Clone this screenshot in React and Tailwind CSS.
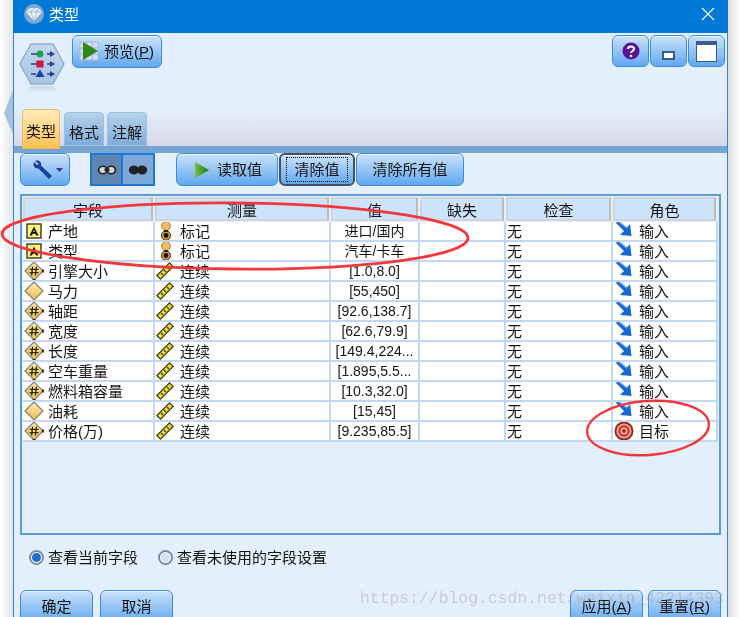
import React from "react";

const rows = [
  ["产地", "A", "flag", "标记", "进口/国内", "in"],
  ["类型", "A", "flag", "标记", "汽车/卡车", "in"],
  ["引擎大小", "#", "ruler", "连续", "[1.0,8.0]", "in"],
  ["马力", "d", "ruler", "连续", "[55,450]", "in"],
  ["轴距", "#", "ruler", "连续", "[92.6,138.7]", "in"],
  ["宽度", "#", "ruler", "连续", "[62.6,79.9]", "in"],
  ["长度", "#", "ruler", "连续", "[149.4,224...", "in"],
  ["空车重量", "#", "ruler", "连续", "[1.895,5.5...", "in"],
  ["燃料箱容量", "#", "ruler", "连续", "[10.3,32.0]", "in"],
  ["油耗", "d", "ruler", "连续", "[15,45]", "in"],
  ["价格(万)", "#", "ruler", "连续", "[9.235,85.5]", "target"],
];

const cols = "grid-cols-[132px_176px_89px_86px_107px_105px]";
const btn =
  "flex items-center justify-center rounded-[6px] border border-[#3a8de0] bg-linear-to-b from-[#cce2fa] to-[#5fa8ee] shadow-[inset_0_1px_0_#eaf4ff] text-[15px] leading-none text-[#141414]";

function FieldIcon({ kind }) {
  if (kind === "A")
    return (
      <svg width="16" height="16" viewBox="0 0 16 16" className="ml-[3px] mr-[6px] shrink-0">
        <rect x="1" y="1" width="14" height="14" fill="#fff27a" stroke="#3a3a1e" strokeWidth="1.4" />
        <path d="M3.5 12.5 L8 3.5 L12.5 12.5 H10 L9.4 10.8 H6.6 L6 12.5 Z M7.2 9 H8.8 L8 6.8 Z" fill="#111" fillRule="evenodd" />
      </svg>
    );
  return (
    <svg width="20" height="20" viewBox="0 0 20 20" className="ml-[1px] mr-[4px] shrink-0">
      <defs>
        <linearGradient id="dia" x1="0" y1="0" x2="0" y2="1">
          <stop offset="0" stopColor="#fff0b8" />
          <stop offset="1" stopColor="#e9b94e" />
        </linearGradient>
      </defs>
      <polygon points="10,1 19,10 10,19 1,10" fill="url(#dia)" stroke="#8b8368" strokeWidth="1.3" />
      {kind === "#" && (
        <>
          <path d="M8.6 5.5 L7.6 14.5 M12.4 5.5 L11.4 14.5 M5.5 8.4 H14.5 M5.5 11.6 H14.5" stroke="#2e2408" strokeWidth="1.3" fill="none" />
          <path d="M19 8.5 V11.5 M8.5 19 H11.5" stroke="#111" strokeWidth="1.6" />
        </>
      )}
    </svg>
  );
}

function MeasureIcon({ kind }) {
  if (kind === "flag")
    return (
      <svg width="12" height="20" viewBox="0 0 12 20" className="ml-[5px] mr-[8px] shrink-0">
        <circle cx="6" cy="5" r="4.4" fill="#f5bd62" stroke="#a9802f" />
        <circle cx="6" cy="14.5" r="4.6" fill="#e09a30" stroke="#333" />
        <circle cx="6" cy="14.5" r="2.4" fill="#0c0c0c" />
        <rect x="4" y="9" width="4" height="2" fill="#222" />
      </svg>
    );
  return (
    <svg width="20" height="20" viewBox="0 0 20 20" className="mr-[5px] shrink-0">
      <polygon points="1,14.5 14.5,1 19,5.5 5.5,19" fill="#3b3b2c" />
      <polygon points="2.8,14.5 14.5,2.8 17.2,5.5 5.5,17.2" fill="#f0e020" />
      <path d="M6 12 L8 14 M9 9 L11 11 M12 6 L14 8" stroke="#333" strokeWidth="1.1" />
    </svg>
  );
}

function RoleIcon({ kind }) {
  if (kind === "target")
    return (
      <svg width="20" height="20" viewBox="0 0 20 20" className="mr-[5px] shrink-0">
        <circle cx="10" cy="10" r="9.5" fill="#8f2a20" />
        <circle cx="10" cy="10" r="7.6" fill="#efa796" />
        <circle cx="10" cy="10" r="5.8" fill="#c93526" />
        <circle cx="10" cy="10" r="3.6" fill="#f2b5a4" />
        <circle cx="10" cy="10" r="2" fill="#bc2c1c" />
      </svg>
    );
  return (
    <svg width="18" height="18" viewBox="0 0 18 18" className="ml-[1px] mr-[6px] -mt-[4px] shrink-0">
      <path d="M1 3 L3 0.5 L12 7.5 L15 4 L16.5 16 L5 15 L9 11 Z" fill="#1667d6" />
      <path d="M3 1.5 L12 8.5" stroke="#6fb0f5" strokeWidth="1" />
    </svg>
  );
}

function Play({ size = 20 }) {
  return (
    <svg width={size} height={size} viewBox="0 0 20 20" className="shrink-0">
      <defs>
        <linearGradient id="pl" x1="0" y1="0" x2="1" y2="0">
          <stop offset="0" stopColor="#7cc04a" />
          <stop offset="1" stopColor="#177a0e" />
        </linearGradient>
      </defs>
      <polygon points="3,2 17,10 3,18" fill="url(#pl)" />
    </svg>
  );
}

function Chain({ dark }) {
  return (
    <svg width="20" height="10" viewBox="0 0 22 12">
      <ellipse cx="6" cy="6" rx="5" ry="4.5" fill={dark ? "#222" : "#d8d8d8"} stroke="#222" strokeWidth="2" />
      <ellipse cx="16" cy="6" rx="5" ry="4.5" fill={dark ? "#222" : "#d8d8d8"} stroke="#222" strokeWidth="2" />
      <rect x="8" y="4" width="6" height="3.5" fill="#222" />
    </svg>
  );
}

function NodeIcon() {
  return (
    <svg width="46" height="52" viewBox="0 0 46 52" className="mt-[8px] shrink-0">
      <defs>
        <linearGradient id="nd" x1="0" y1="0" x2="0" y2="1">
          <stop offset="0" stopColor="#c6d9ee" />
          <stop offset="1" stopColor="#a6c2e2" />
        </linearGradient>
        <linearGradient id="rf" x1="0" y1="0" x2="0" y2="1">
          <stop offset="0" stopColor="#c9d9ea" />
          <stop offset="1" stopColor="#e3effc" />
        </linearGradient>
      </defs>
      <polygon points="12,1 34,1 45,21 34,41 12,41 1,21" fill="url(#nd)" stroke="#8fb0d4" strokeWidth="1.5" />
      <polygon points="12,43 34,43 40,50 6,50" fill="url(#rf)" />
      <path d="M12 11 H18 M28 11 H32 M12 21 H18 M28 21 H32 M12 31 H17 M28 31 H32" stroke="#2b3f8c" strokeWidth="1.3" />
      <circle cx="21" cy="11" r="3.4" fill="#17a34a" />
      <rect x="17.5" y="17.5" width="7" height="7" fill="#d4133f" />
      <polygon points="21,26.5 25.5,34 16.5,34" fill="#1d3fa8" />
      <path d="M31 8 L36 11 L31 14 Z M31 18 L36 21 L31 24 Z M31 28 L36 31 L31 34 Z" fill="#2b3f8c" />
    </svg>
  );
}

function Radio({ on }) {
  return (
    <span className="w-[15px] h-[15px] rounded-full border-2 border-[#7d8da0] bg-white flex items-center justify-center shrink-0">
      <span className={on ? "w-[9px] h-[9px] rounded-full bg-[#1f6fd0]" : "w-[9px] h-[9px] rounded-full bg-[#cfe2f6]"} />
    </span>
  );
}

export default function App() {
  return (
    <div className="relative flex w-[740px] h-[617px] overflow-hidden bg-white font-['Liberation_Sans','Noto_Sans_CJK_SC',sans-serif] blur-[0.35px]">
      <div className="relative w-[13px] shrink-0 bg-linear-to-r from-white to-[#e6e6e6]">
        <svg width="13" height="50" viewBox="0 0 13 50" className="absolute left-0 top-[88px]">
          <polygon points="13,2 4,25 13,46" fill="#a9c1dc" />
        </svg>
      </div>

      <div className="w-[715px] shrink-0 flex flex-col border-x border-[#2f86d8] bg-[#e3effc]">
        <div className="h-[33px] shrink-0 -mx-px bg-[#0078d7] flex items-center justify-between pl-[11px] pr-[13px] pb-[5px]">
          <div className="flex items-center">
            <svg width="20" height="20" viewBox="0 0 20 20" className="mr-[5px]">
              <circle cx="10" cy="10" r="10" fill="#7fa9d2" />
              <polygon points="10,17 2,8 5.5,4 14.5,4 18,8" fill="#eef4fa" />
              <path d="M2 8 H18 M7 8 L10 17 L13 8 M5.5 4 L7 8 L10 4 L13 8 L14.5 4" stroke="#8fb4d8" strokeWidth="0.8" fill="none" />
            </svg>
            <span className="text-[15px] text-white leading-none">类型</span>
          </div>
          <svg width="14" height="14" viewBox="0 0 14 14">
            <path d="M1 1 L13 13 M13 1 L1 13" stroke="#fff" strokeWidth="1.1" />
          </svg>
        </div>

        <div className="h-[113px] shrink-0 flex flex-col justify-between bg-linear-to-b from-[#e3effc] from-[68%] to-[#d9d9e8]">
          <div className="flex items-start justify-between pl-[5px] pr-[2px] pt-[2px]">
            <div className="flex items-start">
              <NodeIcon />
              <button className={btn + " w-[90px] h-[33px] ml-[7px] pb-[1px]"}>
                <span className="flex items-center -ml-[1px]">
                  <svg width="20" height="20" viewBox="0 0 20 20" className="mr-[5px]">
                    <rect x="1" y="1" width="18" height="18" fill="#d4def2" stroke="#aab8dc" />
                    <path d="M1 7 H19 M1 13 H19 M7 1 V19 M13 1 V19" stroke="#9fb0d8" />
                    <polygon points="4,1 19,10 4,19" fill="#2b8a1a" />
                  </svg>
                  预览(<span className="underline">P</span>)
                </span>
              </button>
            </div>
            <div className="flex gap-[1px]">
              <button className={btn + " w-[37px] h-[32px]"}>
                <svg width="18" height="18" viewBox="0 0 18 18">
                  <circle cx="9" cy="9" r="8.5" fill="#5b1199" />
                  <path d="M6 7 C6 3.5 12 3.5 12 7 C12 9 9 9 9 11" stroke="#fff" strokeWidth="2" fill="none" />
                  <circle cx="9" cy="14" r="1.3" fill="#fff" />
                </svg>
              </button>
              <button className={btn + " w-[37px] h-[32px]"}>
                <span className="mt-[8px] w-[13px] h-[9px] bg-white border-2 border-[#3c5a8c]" />
              </button>
              <button className={btn + " w-[37px] h-[32px]"}>
                <span className="w-[21px] h-[21px] bg-white border border-[#3c5a8c] border-t-4" />
              </button>
            </div>
          </div>
          <div className="flex items-end pl-[8px]">
            <div className="w-[38px] h-[40px] -mb-[3px] relative rounded-t-[4px] border border-[#e8bb62] bg-linear-to-b from-[#ffeab8] to-[#ffc24c] flex items-center justify-center text-[15px] text-[#141414] pt-[6px]">
              类型
            </div>
            <div className="w-[40px] h-[34px] ml-[4px] rounded-t-[4px] border border-[#9cc0e2] bg-linear-to-b from-[#b6d2ec] to-[#7eadd9] flex items-center justify-center text-[15px] text-[#141414] pt-[8px]">
              格式
            </div>
            <div className="w-[40px] h-[34px] ml-[3px] rounded-t-[4px] border border-[#9cc0e2] bg-linear-to-b from-[#b6d2ec] to-[#7eadd9] flex items-center justify-center text-[15px] text-[#141414] pt-[8px]">
              注解
            </div>
          </div>
        </div>

        <div className="h-[7px] shrink-0 bg-[#76a5d3]" />

        <div className="flex pl-[6px] h-[33px] shrink-0">
          <button className={btn + " w-[50px] gap-[2px] pl-[4px]"}>
            <svg width="22" height="22" viewBox="0 0 22 22">
              <path d="M3 2 C6 0.5 10 2.5 9 6.5 L20 17 L17 20 L6.5 9.5 C2.5 10 0.5 6 2 3 L5 6 L7 5 Z" fill="#1b3f9c" />
            </svg>
            <svg width="7" height="4" viewBox="0 0 7 4">
              <polygon points="0,0 7,0 3.5,4" fill="#4a2f9c" />
            </svg>
          </button>
          <div className="ml-[20px] w-[65px] flex border-2 border-[#1c78d8]">
            <div className="w-[31px] bg-[#5f86b2] flex items-center justify-center border-r-2 border-[#1c78d8]">
              <Chain />
            </div>
            <div className="w-[30px] bg-[#7da8d8] flex items-center justify-center">
              <Chain dark />
            </div>
          </div>
          <button className={btn + " w-[102px] ml-[21px] gap-[5px]"}>
            <Play /> 读取值
          </button>
          <button className={btn + " w-[76px] ml-[1px] border-2 border-[#3f5468] relative"}>
            <span className="border border-dotted border-black px-[7px] py-[4px]">清除值</span>
          </button>
          <button className={btn + " w-[108px] ml-[1px]"}>清除所有值</button>
        </div>

        <div className="ml-[6px] mt-[8px] w-[701px] h-[341px] shrink-0 border-2 border-[#5e9ad6] pl-[1px] pt-[1px] text-[15px] text-[#141414] leading-none">
          <div className={"grid h-[25px] w-[695px] " + cols}>
            {["字段", "测量", "值", "缺失", "检查", "角色"].map((h) => (
              <div key={h} className="mr-[2px] mb-[1px] bg-[#cde2fb] border-2 border-[#d0d4d8] border-r-[#bcbcbc] flex items-center justify-center pt-[2px]">
                {h}
              </div>
            ))}
          </div>
          {rows.map((r) => (
            <div key={r[0]} className={"grid h-[20px] w-[695px] border-b-2 border-[#c2d8f0] bg-white " + cols}>
              <div className="flex items-center border-r-2 border-[#c2d8f0] overflow-hidden">
                <FieldIcon kind={r[1]} />
                <span>{r[0]}</span>
              </div>
              <div className="flex items-center border-r-2 border-[#c2d8f0] overflow-hidden">
                <MeasureIcon kind={r[2]} />
                <span>{r[3]}</span>
              </div>
              <div className="flex items-center justify-center border-r-2 border-[#c2d8f0] overflow-hidden whitespace-nowrap text-[14px]">
                {r[4]}
              </div>
              <div className="border-r-2 border-[#c2d8f0]" />
              <div className="flex items-center pl-[1px] border-r-2 border-[#c2d8f0]">无</div>
              <div className="flex items-center pl-[1px] border-r-2 border-[#c2d8f0] overflow-hidden">
                <RoleIcon kind={r[5]} />
                <span>{r[5] === "target" ? "目标" : "输入"}</span>
              </div>
            </div>
          ))}
        </div>

        <div className="flex items-center h-[15px] mt-[15px] ml-[15px] shrink-0 text-[15px] text-[#141414] leading-none">
          <Radio on />
          <span className="ml-[4px]">查看当前字段</span>
          <span className="ml-[20px]">
            <Radio />
          </span>
          <span className="ml-[4px]">查看未使用的字段设置</span>
        </div>

        <div className="flex justify-between pl-[6px] pr-[6px] mt-[25px] shrink-0">
          <div className="flex gap-[7px]">
            <button className={btn + " w-[73px] h-[33px]"}>确定</button>
            <button className={btn + " w-[73px] h-[33px]"}>取消</button>
          </div>
          <div className="flex gap-[5px]">
            <button className={btn + " w-[73px] h-[33px]"}>
              <span>应用(<span className="underline">A</span>)</span>
            </button>
            <button className={btn + " w-[73px] h-[33px]"}>
              <span>重置(<span className="underline">R</span>)</span>
            </button>
          </div>
        </div>
      </div>

      <div className="flex-1 bg-linear-to-r from-[#dedede] to-white" />

      <svg width="740" height="617" viewBox="0 0 740 617" className="absolute left-0 top-0 pointer-events-none">
        <ellipse cx="235" cy="236" rx="233" ry="33" fill="none" stroke="#f2383c" strokeWidth="2.8" transform="rotate(0.5 235 236)" />
        <ellipse cx="648" cy="428" rx="61" ry="27" fill="none" stroke="#f2383c" strokeWidth="2.4" transform="rotate(-4 648 428)" />
      </svg>
      <div className="absolute left-[360px] top-[588px] w-[368px] overflow-hidden whitespace-nowrap font-['Liberation_Mono',monospace] text-[16.4px] leading-[22px] text-[#9a9a9a]/40 pointer-events-none">
        https://blog.csdn.net/weixin_42214393
      </div>
    </div>
  );
}
